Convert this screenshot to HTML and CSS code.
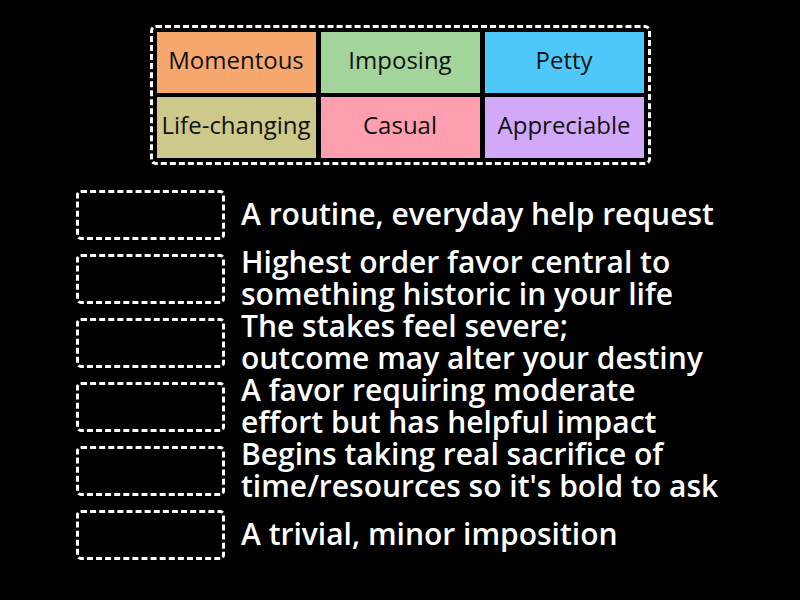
FILE: index.html
```html
<!DOCTYPE html>
<html lang="en">
<head>
  <meta charset="utf-8">
  <meta name="viewport" content="width=device-width, initial-scale=1">
  <title>Match up: favours</title>
  <link rel="stylesheet" href="styles.css">
</head>
<body>

  <main>
    <div class="bank">
      <div class="tile tile-orange">Momentous</div>
      <div class="tile tile-green">Imposing</div>
      <div class="tile tile-blue">Petty</div>
      <div class="tile tile-olive">Life-changing</div>
      <div class="tile tile-pink">Casual</div>
      <div class="tile tile-purple">Appreciable</div>
    </div>

    <ul class="targets">
      <li><span class="slot"></span><span class="clue">A routine, everyday help request</span></li>
      <li><span class="slot"></span><span class="clue">Highest order favor central to<br>something historic in your life</span></li>
      <li><span class="slot"></span><span class="clue">The stakes feel severe;<br>outcome may alter your destiny</span></li>
      <li><span class="slot"></span><span class="clue">A favor requiring moderate<br>effort but has helpful impact</span></li>
      <li><span class="slot"></span><span class="clue">Begins taking real sacrifice of<br>time/resources so it's bold to ask</span></li>
      <li><span class="slot"></span><span class="clue">A trivial, minor imposition</span></li>
    </ul>
  </main>

</body>
</html>
```

FILE: styles.css
```css
*, *::before, *::after { box-sizing: border-box }

body {
  margin: 0;
  background: #000;
  color: #fff;
  font: 600 30px/32px "Open Sans", "DejaVu Sans", sans-serif;
}

main {
  display: flex;
  flex-direction: column;
  align-items: center;
  padding-top: 25px;
}


/*///////////// Word bank */

.bank {
  display: grid;
  grid-template-columns: repeat(3, 159px);
  grid-auto-rows: 61px;
  gap: 4px 5px;
  padding: 4px;
  border: 3px dashed #fff;
  border-radius: 6px;
}

.tile {
  display: flex;
  align-items: center;
  justify-content: center;
  padding-bottom: 6px;
  color: #111;
  font-size: 24px;
  font-weight: 400;
  line-height: 1;
  white-space: nowrap;
}

.tile-orange { background: #f7a86e; }
.tile-green  { background: #a3d49b; }
.tile-blue   { background: #4ec7fa; }
.tile-olive  { background: #cdc98b; }
.tile-pink   { background: #fd9fae; }
.tile-purple { background: #d2a9f9; }


/*///////////// Targets */

.targets {
  list-style: none;
  margin: 18px 0 0 0;
  padding: 0;
  width: 648px;
}

.targets li {
  display: flex;
  align-items: center;
  gap: 16px;
  height: 64px;
}

.slot {
  flex: none;
  width: 149px;
  height: 50px;
  border: 3px dashed #fff;
  border-radius: 5px;
}

.clue {
  padding-bottom: 3px;
  white-space: nowrap;
}
```
